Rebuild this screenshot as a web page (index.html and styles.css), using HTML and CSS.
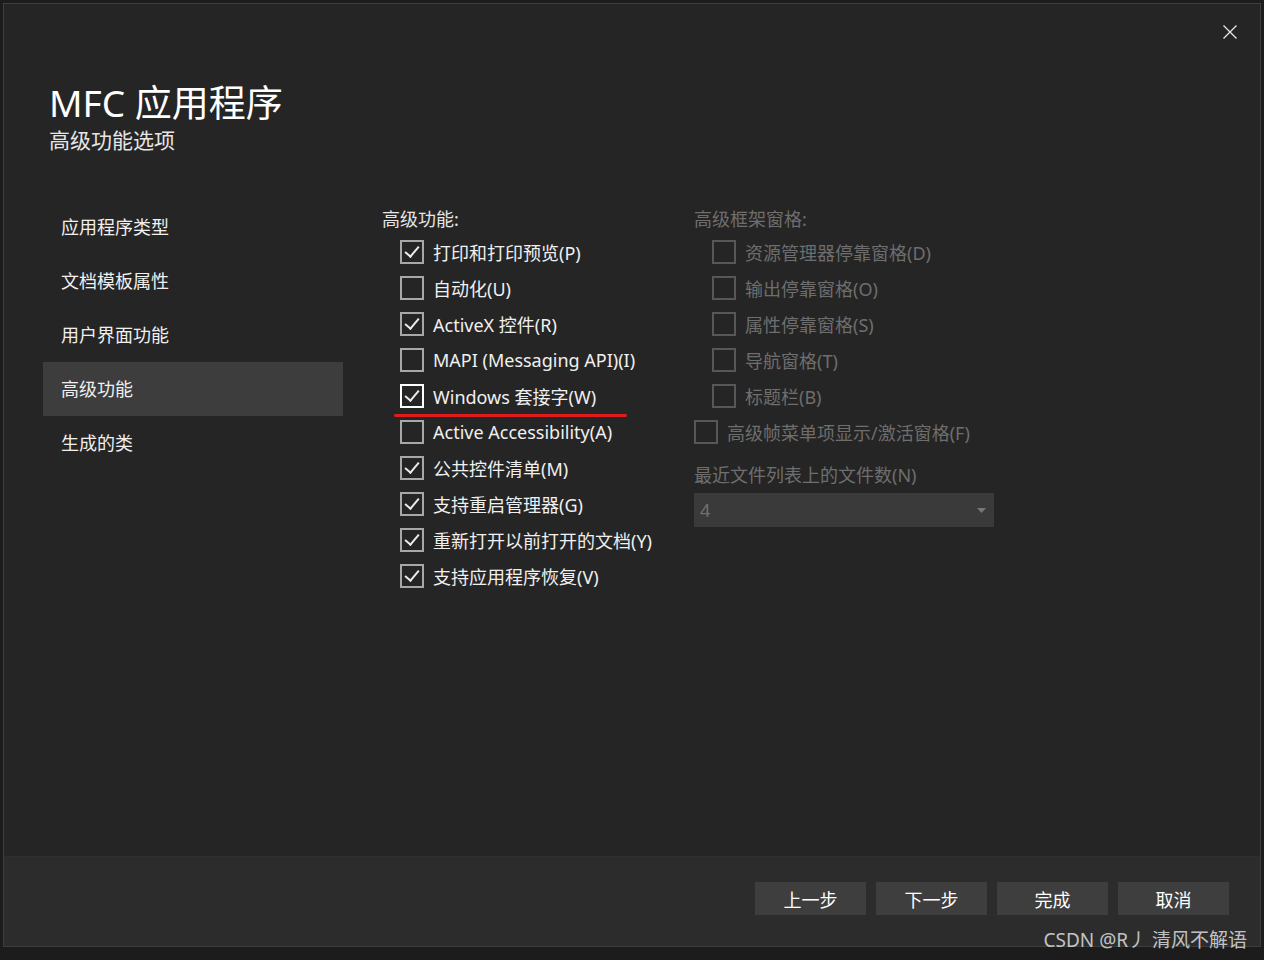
FILE: index.html
```html
<!DOCTYPE html>
<html lang="zh-CN">
<head>
  <meta charset="UTF-8">
  <title>MFC 应用程序</title>
  <link rel="stylesheet" href="styles.css">
</head>
<body>

  <div class="dialog">

    <div class="main-area">
      <div class="header">
        <div class="titles">
          <h1 class="title">MFC 应用程序</h1>
          <p class="subtitle">高级功能选项</p>
        </div>
        <button class="close-btn"><svg width="16" height="16" viewBox="0 0 16 16"><path d="M1.5 1.5L14.5 14.5M14.5 1.5L1.5 14.5" stroke="#e6e6e6" stroke-width="1.3" fill="none"/></svg></button>
      </div>

      <div class="content">
        <ul class="nav">
          <li class="nav-item">应用程序类型</li>
          <li class="nav-item">文档模板属性</li>
          <li class="nav-item">用户界面功能</li>
          <li class="nav-item selected">高级功能</li>
          <li class="nav-item">生成的类</li>
        </ul>

        <div class="options-col">
          <p class="group-label">高级功能:</p>
          <div class="check-row indent"><span class="box checked"></span>打印和打印预览(P)</div>
          <div class="check-row indent"><span class="box"></span>自动化(U)</div>
          <div class="check-row indent"><span class="box checked"></span>ActiveX 控件(R)</div>
          <div class="check-row indent"><span class="box"></span>MAPI (Messaging API)(I)</div>
          <div class="check-row indent marked"><span class="box checked focus"></span>Windows 套接字(W)</div>
          <div class="check-row indent"><span class="box"></span>Active Accessibility(A)</div>
          <div class="check-row indent"><span class="box checked"></span>公共控件清单(M)</div>
          <div class="check-row indent"><span class="box checked"></span>支持重启管理器(G)</div>
          <div class="check-row indent"><span class="box checked"></span>重新打开以前打开的文档(Y)</div>
          <div class="check-row indent"><span class="box checked"></span>支持应用程序恢复(V)</div>
        </div>

        <div class="options-col disabled">
          <p class="group-label">高级框架窗格:</p>
          <div class="check-row indent"><span class="box"></span>资源管理器停靠窗格(D)</div>
          <div class="check-row indent"><span class="box"></span>输出停靠窗格(O)</div>
          <div class="check-row indent"><span class="box"></span>属性停靠窗格(S)</div>
          <div class="check-row indent"><span class="box"></span>导航窗格(T)</div>
          <div class="check-row indent"><span class="box"></span>标题栏(B)</div>
          <div class="check-row"><span class="box"></span>高级帧菜单项显示/激活窗格(F)</div>
          <p class="combo-label">最近文件列表上的文件数(N)</p>
          <div class="combo"><span>4</span><svg width="9" height="5" viewBox="0 0 9 5"><path d="M0 0H9L4.5 5Z" fill="#777"/></svg></div>
        </div>
      </div>
    </div>

    <div class="footer">
      <button class="btn">上一步</button>
      <button class="btn">下一步</button>
      <button class="btn">完成</button>
      <button class="btn">取消</button>
    </div>

    <div class="watermark">CSDN @R丿 清风不解语</div>

  </div>

</body>
</html>
```

FILE: styles.css
```css
body{
  margin: 0;
  min-height: 960px;
  background-color: #1c1c1c;
  font-family: "Noto Sans", "Noto Sans CJK SC", sans-serif;
  color: #f0f0f0;
}
.dialog{
  position: relative;
  margin-top: 3px;
  margin-left: 3px;
  width: 1256px;
  height: 942px;
  border: 1px solid #3e3e3e;
  background-color: #252525;
  display: flex;
  flex-direction: column;
}
.main-area{
  flex: 1;
}
.header{
  display: flex;
  justify-content: space-between;
  padding-left: 45px;
  padding-right: 18px;
}
.title{
  margin: 77px 0 0 0;
  font-size: 37px;
  font-weight: normal;
  line-height: 44px;
  color: #ffffff;
}
.subtitle{
  margin: 0;
  font-size: 21px;
  line-height: 30px;
  color: #e6e6e6;
}
.close-btn{
  margin-top: 16px;
  width: 24px;
  height: 24px;
  padding: 0;
  background: transparent;
  border: none;
  display: flex;
  align-items: center;
  justify-content: center;
}
.content{
  display: flex;
  padding-top: 49px;
}
.nav{
  list-style: none;
  margin: 0 0 0 39px;
  padding: 0;
  width: 300px;
  margin-right: 39px;
}
.nav-item{
  height: 54px;
  line-height: 54px;
  padding-left: 18px;
  font-size: 18px;
  color: #f0f0f0;
}
.nav-item.selected{
  background-color: #3d3d3d;
}
.nav-item:first-child{
  margin-top: -4px;
}
.options-col{
  width: 312px;
  font-size: 18px;
}
.group-label{
  margin: 0;
  height: 30px;
  line-height: 30px;
  color: #e6e6e6;
}
.check-row{
  position: relative;
  display: flex;
  align-items: center;
  height: 36px;
  white-space: nowrap;
  color: #f0f0f0;
}
.check-row.indent{
  padding-left: 18px;
}
.box{
  box-sizing: border-box;
  width: 24px;
  height: 24px;
  border: 2px solid #a8a8a8;
  margin-right: 9px;
  flex-shrink: 0;
  display: flex;
  align-items: center;
  justify-content: center;
}
.box.checked::after{
  content: "";
  width: 6px;
  height: 12px;
  border-right: 2px solid #ececec;
  border-bottom: 2px solid #ececec;
  transform: rotate(40deg);
  margin-top: -4px;
}
.box.focus{
  border-color: #ffffff;
}
.marked::after{
  content: "";
  position: absolute;
  left: 12px;
  bottom: -3px;
  width: 233px;
  height: 3px;
  border-radius: 2px;
  background-color: #e01b1b;
}
.disabled .group-label,
.disabled .check-row,
.disabled .combo-label{
  color: #6e6e6e;
}
.disabled .box{
  border-color: #575757;
}
.combo-label{
  margin: 10px 0 0 0;
  height: 30px;
  line-height: 30px;
}
.combo{
  margin-top: 3px;
  width: 300px;
  height: 34px;
  box-sizing: border-box;
  background-color: #3a3a3a;
  display: flex;
  align-items: center;
  justify-content: space-between;
  padding: 0 8px 0 6px;
  color: #707070;
}
.footer{
  height: 90px;
  background-color: #2c2c2c;
  border-top: 1px solid #2f2f2f;
  display: flex;
  justify-content: flex-end;
  align-items: flex-start;
  gap: 10px;
  padding-right: 31px;
  padding-top: 25px;
  box-sizing: border-box;
}
.btn{
  width: 111px;
  height: 33px;
  background-color: #3e3e3e;
  border: none;
  color: #ffffff;
  font-family: "Noto Sans CJK SC", sans-serif;
  font-size: 18px;
  padding: 0;
}
.watermark{
  position: absolute;
  right: 13px;
  bottom: -6px;
  line-height: 24px;
  font-size: 19px;
  color: rgba(235, 235, 235, 0.8);
  font-family: "Noto Sans", "Noto Sans CJK SC", sans-serif;
}
```
